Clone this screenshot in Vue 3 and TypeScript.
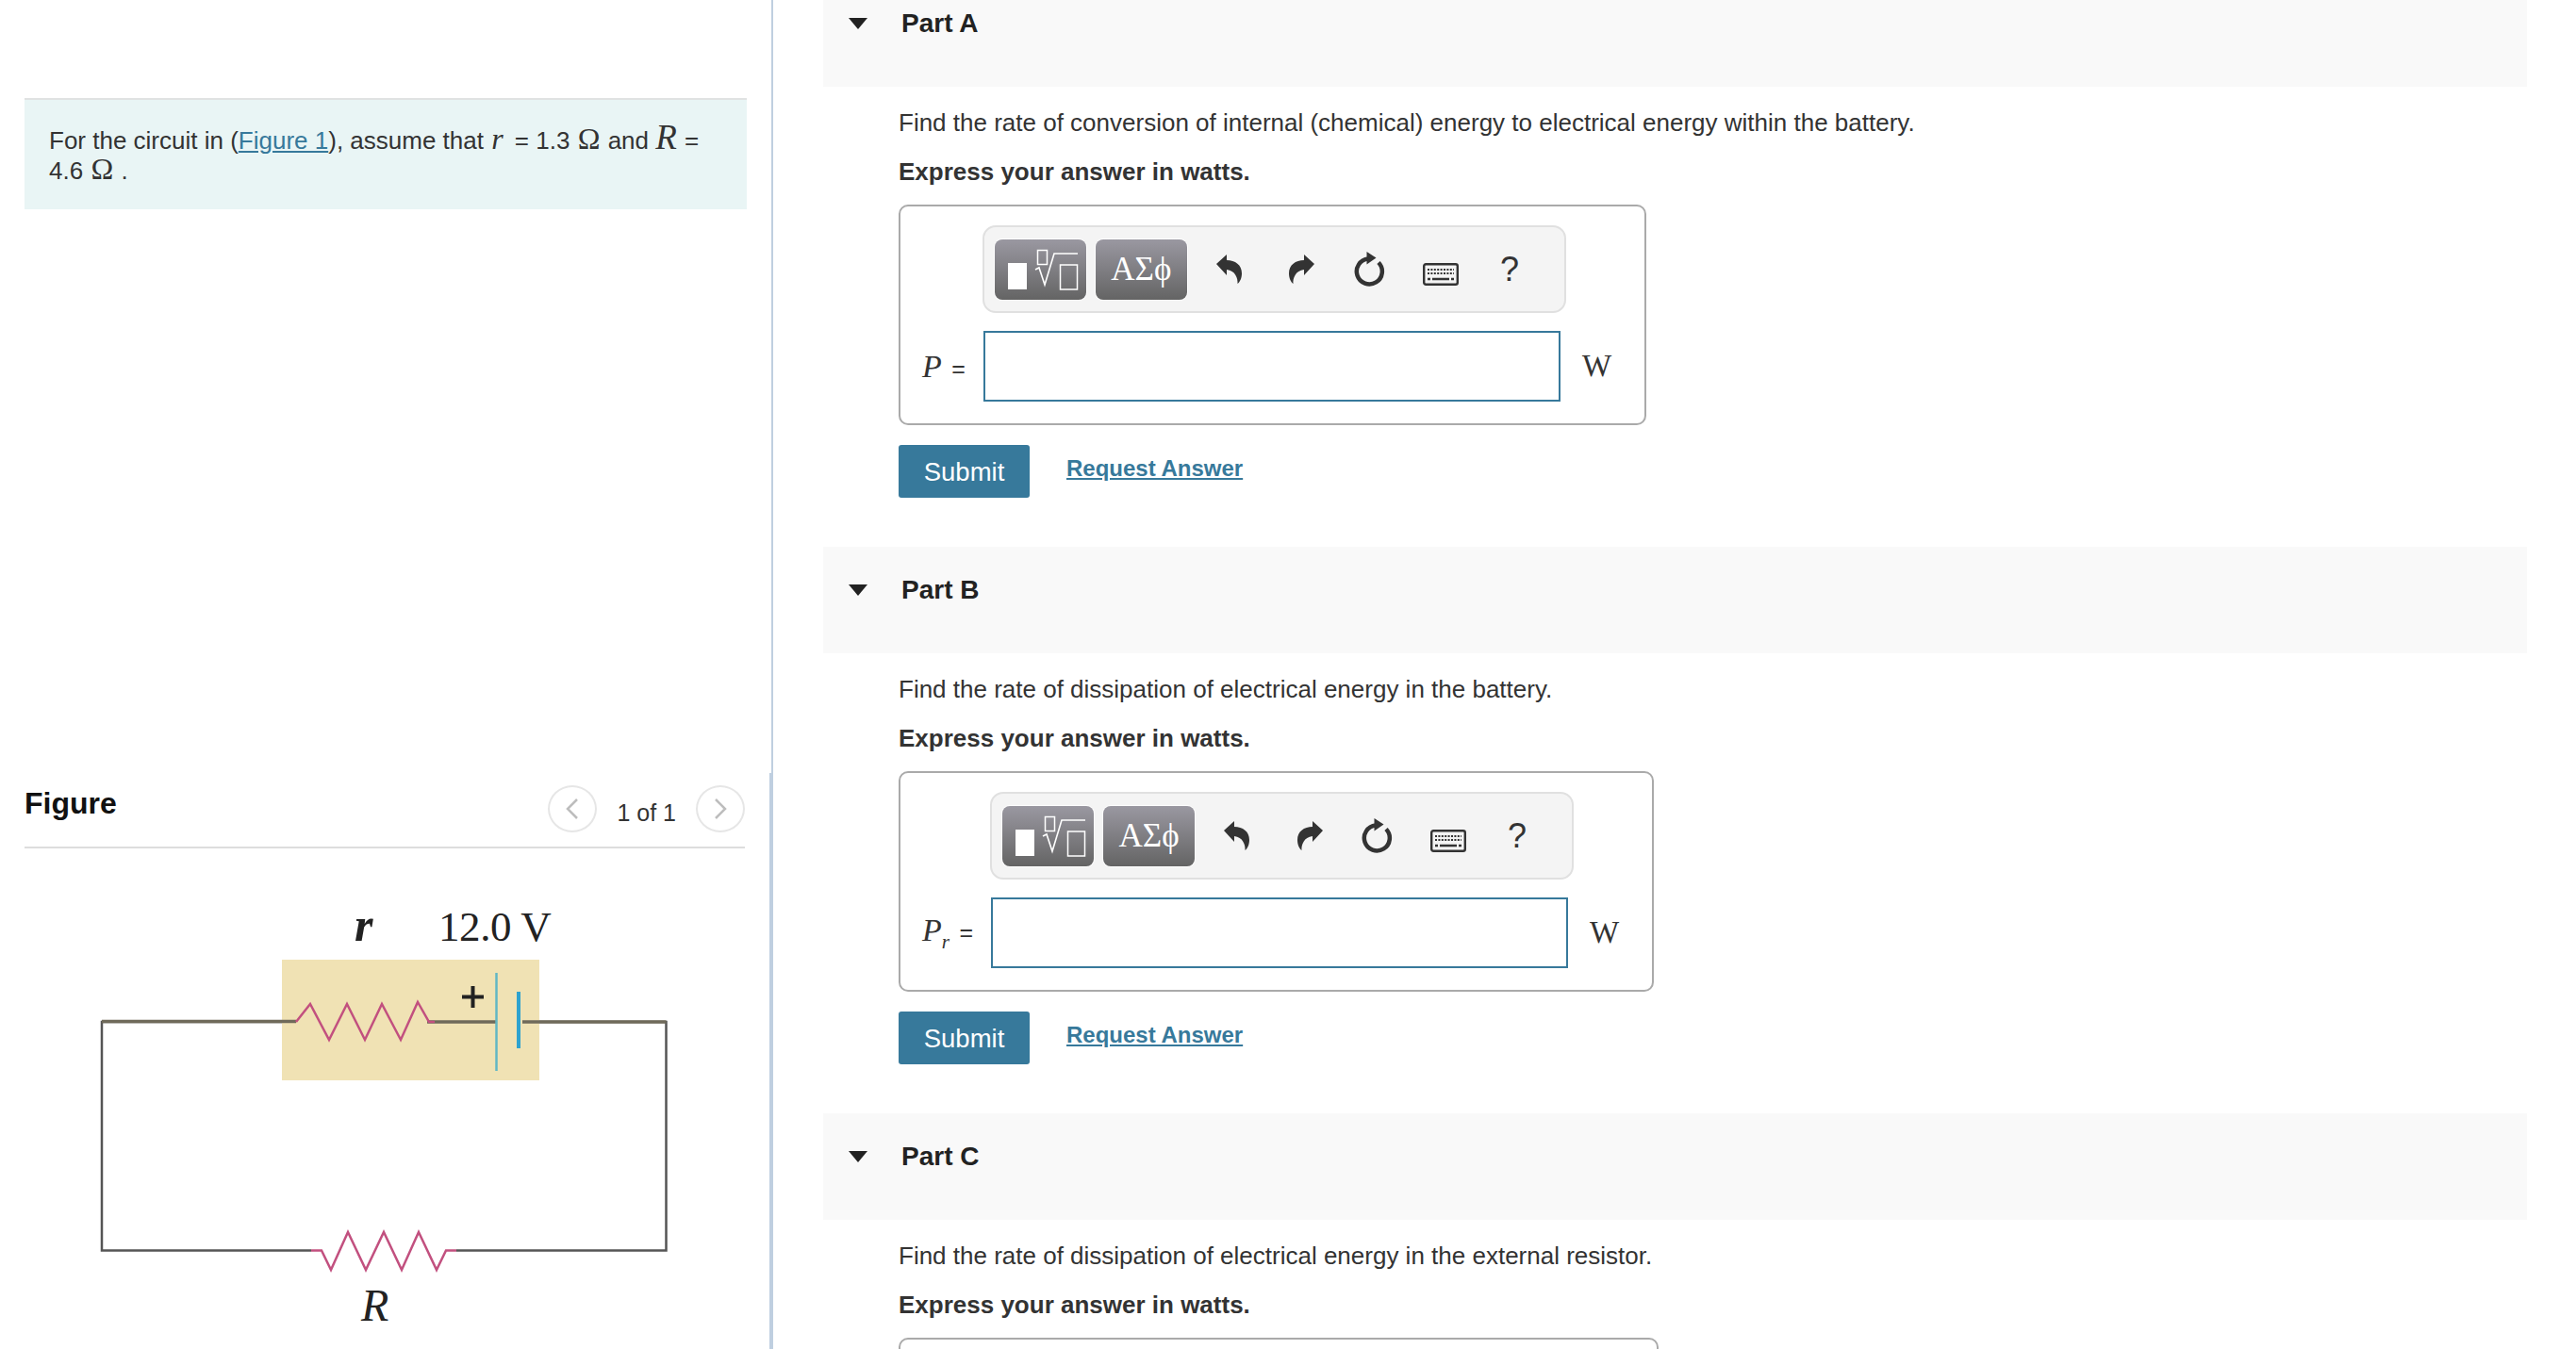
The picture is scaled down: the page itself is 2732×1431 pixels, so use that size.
<script setup lang="ts">
interface Part {
  title: string
  question: string
  symbol: string
  sub: string
}

const parts: Part[] = [
  { title: 'Part A', question: 'Find the rate of conversion of internal (chemical) energy to electrical energy within the battery.', symbol: 'P', sub: '' },
  { title: 'Part B', question: 'Find the rate of dissipation of electrical energy in the battery.', symbol: 'P', sub: 'r' },
  { title: 'Part C', question: 'Find the rate of dissipation of electrical energy in the external resistor.', symbol: 'P', sub: 'R' },
]

const topResistor = '314,1083 329,1064 349,1102 368,1064 387,1102 405,1064 425,1102 443,1062 455,1083 461,1083'
const bottomResistor = '330,1325.5 341,1325.5 351,1346 369,1306 388,1346 407,1306 426,1346 444,1306 463,1346 473,1325.5 484,1325.5'
</script>

<template>
  <div class="page">
    <aside class="left">
      <div class="left-top">
        <div class="intro">
          For the circuit in (<a class="link">Figure 1</a>), assume that <i class="m r">r</i> = 1.3 <span class="m om">Ω</span> and <i class="m big">R</i> =
          4.6 <span class="m om">Ω</span> .
        </div>
      </div>

      <div class="left-bottom">
        <div class="fig-head">
          <h2 class="fig-title">Figure</h2>
          <div class="pager">
            <span class="nav">
              <svg width="16" height="26" viewBox="0 0 16 26"><path d="M13 3 L3 13 L13 23" /></svg>
            </span>
            <span class="count">1 of 1</span>
            <span class="nav">
              <svg width="16" height="26" viewBox="0 0 16 26"><path d="M3 3 L13 13 L3 23" /></svg>
            </span>
          </div>
        </div>

        <svg class="circuit" width="764" height="532" viewBox="26 899 764 532">
          <rect x="299" y="1017" width="273" height="128" fill="#f0e2b4" />
          <path d="M299 1083 H108 V1325.5 H330 M484 1325.5 H706.5 V1083 H572" fill="none" stroke="#555" stroke-width="2.5" />
          <path d="M108 1082.5 H314 M453 1083 H526 M554 1083 H706.5" fill="none" stroke="#6f6a5a" stroke-width="3.5" />
          <polyline :points="topResistor" fill="none" stroke="#c2507f" stroke-width="2.5" />
          <polyline :points="bottomResistor" fill="none" stroke="#c2507f" stroke-width="2.5" />
          <path d="M526.5 1031 V1135" stroke="#62b7c4" stroke-width="2.5" />
          <path d="M550 1051 V1111" stroke="#2ea3cf" stroke-width="4" />
          <path d="M501.5 1045 V1068 M490 1056.5 H513" stroke="#222" stroke-width="4" />
          <text x="376" y="997" class="fig-label fig-it fig-bold">r</text>
          <text x="465" y="997" class="fig-label fig-tight">12.0 V</text>
          <text x="383" y="1400" class="fig-label fig-it fig-r">R</text>
        </svg>
      </div>
    </aside>

    <main class="right">
      <section v-for="part in parts" :key="part.title" class="part">
        <header class="part-head">
          <span class="tri"></span>
          <h3 class="part-title">{{ part.title }}</h3>
        </header>
        <div class="part-body">
          <p class="q">{{ part.question }}</p>
          <p class="express">Express your answer in watts.</p>
          <div class="answer">
            <div class="toolbar">
              <span class="tbtn">
                <svg width="97" height="64" viewBox="0 0 97 64">
                  <rect x="14" y="25" width="20" height="28" fill="#fff" />
                  <rect x="45.5" y="11.5" width="10" height="15" fill="none" stroke="#fff" stroke-width="1.5" />
                  <path d="M43 32 L47 30 L53 48 L63 15 H88" fill="none" stroke="#fff" stroke-width="1.6" />
                  <rect x="69.5" y="27" width="18" height="26" fill="none" stroke="#fff" stroke-width="1.5" />
                </svg>
              </span>
              <span class="tbtn tgreek">ΑΣϕ</span>
              <span class="tool">
                <svg width="28" height="32" viewBox="0 0 28 32"><path d="M0 10 L11 0 V6 C20 6 27 11 27 20 C27 25 25 29 22.5 31 C23 25 20 17 11 16 V22 Z" fill="#333" /></svg>
              </span>
              <span class="tool redo">
                <svg width="28" height="32" viewBox="0 0 28 32"><path d="M28 10 L17 0 V6 C8 6 1 11 1 20 C1 25 3 29 5.5 31 C5 25 8 17 17 16 V22 Z" fill="#333" /></svg>
              </span>
              <span class="tool">
                <svg width="34" height="37" viewBox="0 0 34 37">
                  <path d="M16 7.5 A13.5 13.5 0 1 0 27 11.5" fill="none" stroke="#333" stroke-width="4.5" />
                  <path d="M14.5 0 L24.5 6.5 L14.5 13.5 Z" fill="#333" />
                </svg>
              </span>
              <span class="tool kbd">
                <svg width="38" height="24" viewBox="0 0 38 24">
                  <rect x="1.2" y="1.2" width="35.6" height="21.6" rx="2" fill="#f4f4f4" stroke="#333" stroke-width="2.4" />
                  <path d="M5 7 H33 M5 11 H33" stroke="#333" stroke-width="2" stroke-dasharray="2 1.4" />
                  <path d="M5 17 H8 M10 17 H28 M30 17 H33" stroke="#333" stroke-width="2.4" />
                </svg>
              </span>
              <span class="tool help">?</span>
            </div>
            <span class="sym"><i>{{ part.symbol }}</i><sub v-if="part.sub">{{ part.sub }}</sub> <span class="eq">=</span></span>
            <span class="input"></span>
            <span class="unit">W</span>
          </div>
          <div class="actions">
            <span class="submit">Submit</span>
            <a class="link req">Request Answer</a>
          </div>
        </div>
      </section>
    </main>
  </div>
</template>

<style>
html, body {
  margin: 0;
  background: #fff;
}
</style>

<style scoped>
.page {
  display: flex;
  width: 2732px;
  height: 1431px;
  overflow: hidden;
  font-family: "Liberation Sans", Arial, sans-serif;
  color: #333;
  background: #fff;
}

.left {
  flex: none;
  width: 820px;
}

.left-top {
  height: 820px;
  box-sizing: border-box;
  padding: 104px 0 0 26px;
  border-right: 2px solid #bfcfe0;
}

.left-bottom {
  height: 611px;
  box-sizing: border-box;
  padding: 13px 0 0 26px;
  border-right: 4px solid #bfcfe0;
}

.intro {
  width: 766px;
  height: 118px;
  box-sizing: border-box;
  padding: 27px 26px 0;
  background: #e9f5f5;
  border-top: 2px solid #e0e2e2;
  font-size: 26px;
  line-height: 32px;
}

.m {
  font-family: "Liberation Serif", serif;
  line-height: 0;
}

.r {
  margin: 0 5px 0 1px;
  font-size: 32px;
  font-weight: normal;
}

.big {
  margin-right: 1px;
  font-size: 37px;
}

.om {
  margin: 0 1px;
  font-size: 32px;
}

.link {
  color: #37799b;
  text-decoration: underline;
}

.fig-head {
  display: flex;
  justify-content: space-between;
  width: 764px;
  height: 65px;
  border-bottom: 2px solid #ddd;
}

.fig-title {
  margin: 0;
  padding-top: 1px;
  font-size: 32px;
  line-height: 37px;
  color: #111;
}

.pager {
  display: flex;
  align-items: flex-start;
  gap: 21px;
}

.nav {
  display: flex;
  align-items: center;
  justify-content: center;
  width: 48px;
  height: 46px;
  border: 2px solid #e6e6e6;
  border-radius: 50%;
}

.nav path {
  fill: none;
  stroke: #bdbdbd;
  stroke-width: 2.5;
}

.count {
  padding-top: 14px;
  font-size: 25px;
  line-height: 30px;
}

.circuit {
  display: block;
}

.fig-label {
  font-family: "Liberation Serif", serif;
  font-size: 45px;
  fill: #222;
}

.fig-tight {
  letter-spacing: -0.4px;
}

.fig-it {
  font-style: italic;
}

.fig-bold {
  font-size: 50px;
  font-weight: bold;
}

.fig-r {
  font-size: 48px;
}

.right {
  flex: none;
  width: 1807px;
  margin: -21px 0 0 53px;
}

.part {
  margin-bottom: 52px;
}

.part-head {
  display: flex;
  align-items: flex-start;
  gap: 36px;
  height: 113px;
  box-sizing: border-box;
  padding: 30px 0 0 27px;
  background: #f9f9f9;
}

.tri {
  flex: none;
  margin-top: 10px;
  border-top: 12px solid #222;
  border-left: 10.5px solid transparent;
  border-right: 10.5px solid transparent;
}

.part-title {
  margin: 0;
  font-size: 28px;
  line-height: 32px;
  color: #222;
}

.part-body {
  padding: 23px 0 0 80px;
}

.q,
.express {
  margin: 0;
  font-size: 26px;
  line-height: 31px;
}

.express {
  margin-top: 21px;
  font-weight: bold;
}

.answer {
  display: grid;
  grid-template-columns: auto 612px auto;
  align-items: center;
  width: fit-content;
  box-sizing: border-box;
  margin-top: 19px;
  padding: 20px 35px 23px 23px;
  border: 2px solid #aaa;
  border-radius: 10px;
}

.toolbar {
  grid-column: 2;
  display: flex;
  align-items: center;
  width: 619px;
  height: 93px;
  box-sizing: border-box;
  margin: 0 0 19px -1px;
  padding-left: 11px;
  background: #f4f4f4;
  border: 2px solid #e0e0e0;
  border-radius: 14px;
}

.tbtn {
  flex: none;
  display: flex;
  align-items: center;
  justify-content: center;
  width: 97px;
  height: 64px;
  margin-right: 10px;
  border-radius: 8px;
  background: linear-gradient(#9a98a1, #646464);
  box-shadow: 0 0 0 1px #fff;
  color: #fff;
}

.tgreek {
  margin-right: 8px;
  font-family: "Liberation Serif", serif;
  font-size: 35px;
}

.tool {
  flex: none;
  display: flex;
  align-items: center;
  justify-content: center;
  width: 74px;
}

.redo {
  padding-left: 5px;
  box-sizing: border-box;
}

.kbd {
  margin-top: 10px;
  padding-left: 4px;
  box-sizing: border-box;
}

.help {
  padding-left: 2px;
  box-sizing: border-box;
  font-size: 36px;
  color: #333;
}

.sym {
  grid-column: 1;
  grid-row: 2;
  padding-right: 19px;
  font-family: "Liberation Serif", serif;
  font-size: 34px;
  white-space: nowrap;
}

.sym sub {
  font-size: 21px;
  font-style: italic;
}

.eq {
  margin-left: 2px;
  font-family: "Liberation Sans", sans-serif;
  font-size: 25px;
}

.input {
  grid-column: 2;
  grid-row: 2;
  height: 75px;
  box-sizing: border-box;
  border: 2px solid #37799b;
}

.unit {
  grid-column: 3;
  grid-row: 2;
  padding-left: 23px;
  font-family: "Liberation Serif", serif;
  font-size: 33px;
}

.actions {
  display: flex;
  align-items: flex-start;
  gap: 39px;
  margin-top: 21px;
}

.submit {
  display: block;
  width: 139px;
  height: 56px;
  border-radius: 3px;
  background: #37799b;
  color: #fff;
  font-size: 27.5px;
  line-height: 57px;
  text-align: center;
}

.req {
  padding-top: 11px;
  font-size: 24px;
  line-height: 28px;
  font-weight: bold;
}
</style>
